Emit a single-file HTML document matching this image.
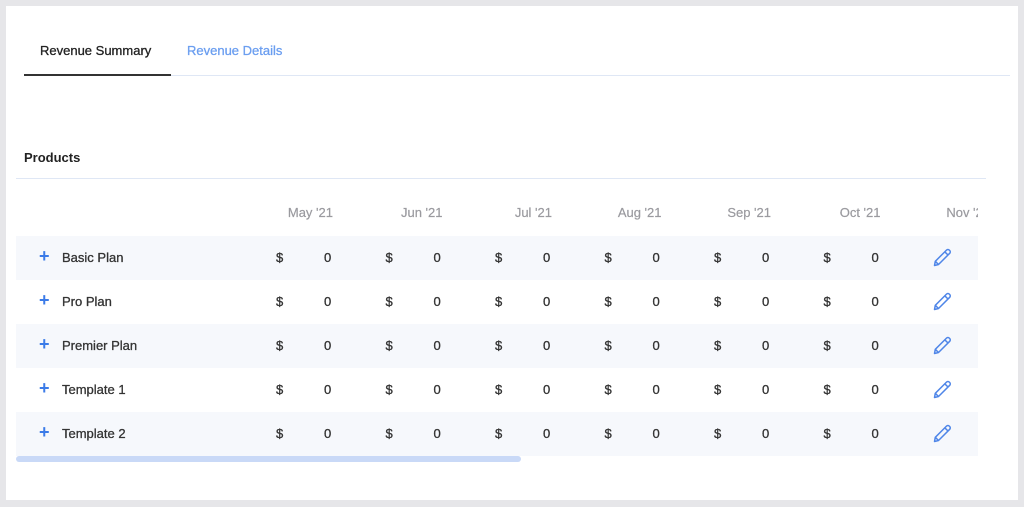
<!DOCTYPE html>
<html><head><style>
body{margin:0;width:1024px;height:507px;background:#e6e6e9;font-family:"Liberation Sans",sans-serif;position:relative;overflow:hidden}
.panel{position:absolute;left:6px;top:6px;width:1012px;height:494px;background:#fff}
.a{position:absolute;white-space:nowrap}
.row{position:absolute;left:16px;width:962px;height:44px}
.sh{background:#f6f8fc}
.t{font-size:13px;color:#333;-webkit-text-stroke:0.3px #333}
.m{font-size:13px;color:#9a9a9f;-webkit-text-stroke:0.2px #9a9a9f}
</style></head><body>
<div class="panel"></div>
<div class="a" style="left:40px;top:43px;font-size:13px;color:#222;-webkit-text-stroke:0.3px #222">Revenue Summary</div>
<div class="a" style="left:187px;top:43px;font-size:13px;color:#6b9ef0;-webkit-text-stroke:0.3px #6b9ef0">Revenue Details</div>
<div class="a" style="left:24px;top:75px;width:986px;height:1px;background:#dfe7f5"></div>
<div class="a" style="left:24px;top:74px;width:147px;height:2px;background:#333"></div>
<div class="a" style="left:24px;top:150px;font-size:13px;font-weight:bold;color:#222">Products</div>
<div class="a" style="left:16px;top:178px;width:970px;height:1px;background:#dfe7f5"></div>
<div class="row sh" style="top:236px"></div>
<div class="row" style="top:280px"></div>
<div class="row sh" style="top:324px"></div>
<div class="row" style="top:368px"></div>
<div class="row sh" style="top:412px"></div>
<div id="c"></div>
<div class="a" style="left:16px;top:456px;width:505px;height:6px;border-radius:3px;background:#c9d9f7"></div>
<script>
var h='',months=["May '21","Jun '21","Jul '21","Aug '21","Sep '21","Oct '21","Nov '21"];
months.forEach(function(m,i){var r=333+i*109.5;h+='<div class="a m" style="left:'+(r-50)+'px;width:50px;text-align:right;top:205px">'+m+'</div>';});
var names=["Basic Plan","Pro Plan","Premier Plan","Template 1","Template 2"];
names.forEach(function(n,j){var y=250+j*44;
h+='<div class="a" style="left:39px;top:'+(y-4)+'px;font-size:18px;color:#3b7be8;font-weight:bold">+</div>';
h+='<div class="a t" style="left:62px;top:'+y+'px">'+n+'</div>';
for(var i=0;i<6;i++){var x=276+i*109.5;h+='<div class="a t" style="left:'+x+'px;top:'+y+'px">$</div><div class="a t" style="left:'+(x+48)+'px;top:'+y+'px">0</div>';}
h+='<svg class="a" style="left:931px;top:'+(y-4)+'px" width="22" height="22" viewBox="0 0 22 22" fill="none" stroke="#4f86e8" stroke-width="1.5" stroke-linejoin="round" stroke-linecap="round"><path d="M3.5 19.5l0.8-4.2L15.5 4.1a2 2 0 0 1 2.8 0l0.4 0.4a2 2 0 0 1 0 2.8L7.5 18.5z M13.8 5.8l3.2 3.2 M4.3 15.3l3.2 3.2"/></svg>';
});
document.getElementById('c').innerHTML=h;
</script>
<div style="position:absolute;left:978px;top:190px;width:40px;height:280px;background:#fff"></div>
</body></html>
